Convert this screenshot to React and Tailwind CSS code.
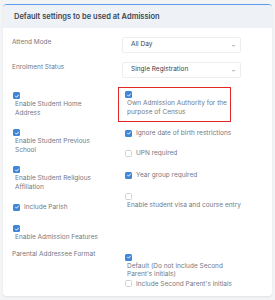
import React from 'react';

const Box = ({ checked }) =>
  checked ? (
    <span className="inline-flex h-[7px] w-[7px] shrink-0 items-center justify-center rounded-[1.5px] bg-[#3f86d6]">
      <svg viewBox="0 0 10 10" className="h-[6px] w-[6px]" fill="none" stroke="white" strokeWidth="1.6" strokeLinecap="round" strokeLinejoin="round">
        <path d="M2.5 5.2 4.3 7 7.6 3.4" />
      </svg>
    </span>
  ) : (
    <span className="inline-block h-[7px] w-[7px] shrink-0 rounded-[1.5px] border border-[#cfd3d8] bg-white" />
  );

const Stacked = ({ checked, lines, className = '' }) => (
  <div className={`flex flex-col ${className}`}>
    <Box checked={checked} />
    <div className="mt-[1px] whitespace-nowrap pl-[2px] leading-[8.5px]">
      {lines.map((l) => (
        <div key={l}>{l}</div>
      ))}
    </div>
  </div>
);

const Inline = ({ checked, label, className = '' }) => (
  <div className={`flex items-center gap-[4px] whitespace-nowrap leading-[8px] ${className}`}>
    <Box checked={checked} />
    <span>{label}</span>
  </div>
);

const Select = ({ value }) => (
  <div className="flex h-[16px] w-[119px] items-center justify-between rounded-[2px] border border-[#eceef1] bg-white pl-[8px] pr-[4px] text-[6.5px] text-[#3f3f46]">
    <span>{value}</span>
    <svg viewBox="0 0 10 10" className="h-[5px] w-[5px]" fill="none" stroke="#888" strokeWidth="1.6">
      <path d="M2.5 4 5 6.5 7.5 4" />
    </svg>
  </div>
);

export default function App() {
  return (
    <div className="h-[300px] w-[275px] bg-[#f3f4f6] px-[3px] pt-[4px]" style={{ fontFamily: 'Inter, "Liberation Sans", sans-serif' }}>
      <div className="h-[292px] overflow-hidden rounded-[4px] border-t-[1.5px] border-[#5b9bef] bg-white shadow-[0_1px_2px_rgba(0,0,0,0.08)]">
        <div className="flex h-[23px] items-center bg-[#eef2f7] pl-[11px] text-[7.5px] font-semibold text-[#3b4654]">
          Default settings to be used at Admission
        </div>

        <div className="pl-[9px] text-[6.5px] text-[#74787f]">
          <div className="mt-[9px] grid grid-cols-[110px_120px] items-start">
            <div className="pt-[1px] leading-[8px]">Attend Mode</div>
            <Select value="All Day" />
          </div>
          <div className="mt-[9px] grid grid-cols-[110px_120px] items-start">
            <div className="pt-[1px] leading-[8px]">Enrolment Status</div>
            <Select value="Single Registration" />
          </div>

          <div className="mt-[9px] grid grid-cols-[106px_130px] items-start">
            <div className="flex flex-col pl-[1px] pt-[5px]">
              <Stacked checked lines={['Enable Student Home', 'Address']} />
              <Stacked checked lines={['Enable Student Previous', 'School']} className="mt-[12px]" />
              <Stacked checked lines={['Enable Student Religious', 'Affiliation']} className="mt-[12px]" />
              <Inline checked label="Include Parish" className="mt-[12px]" />
              <Stacked checked lines={['Enable Admission Features']} className="mt-[14px]" />
            </div>
            <div className="flex flex-col">
              <div className="w-[113px] border-[1.5px] border-[#e32626] px-[6px] pb-[5px] pt-[3px]">
                <Stacked checked lines={['Own Admission Authority for the', 'purpose of Census']} />
              </div>
              <Inline checked label="Ignore date of birth restrictions" className="ml-[7px] mt-[7px]" />
              <Inline checked={false} label="UPN required" className="ml-[7px] mt-[12px]" />
              <Inline checked label="Year group required" className="ml-[7px] mt-[14px]" />
              <Stacked checked={false} lines={['Enable student visa and course entry']} className="ml-[7px] mt-[14px]" />
            </div>
          </div>

          <div className="mt-[8px] grid grid-cols-[113px_130px] items-start">
            <div className="leading-[8px]">Parental Addressee Format</div>
            <div className="flex flex-col pt-[4px]">
              <Stacked checked lines={['Default (Do not include Second', "Parent's initials)"]} />
              <Inline checked={false} label="Include Second Parent's initials" className="mt-[1px]" />
            </div>
          </div>
        </div>
      </div>
    </div>
  );
}
